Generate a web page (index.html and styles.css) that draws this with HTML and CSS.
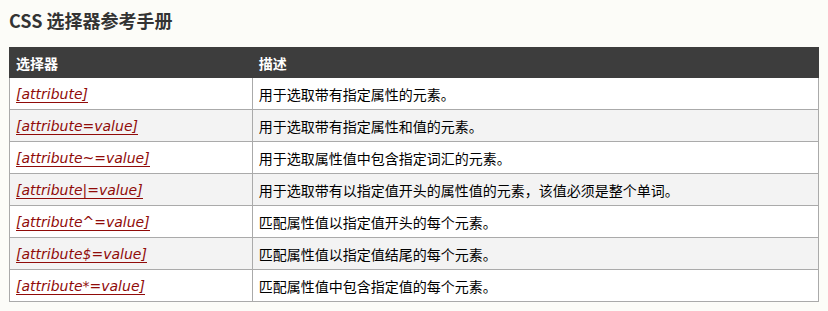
FILE: index.html
```html
<!DOCTYPE html>
<html lang="zh">
<head>
<meta charset="utf-8">
<title>CSS 选择器参考手册</title>
<link rel="stylesheet" href="styles.css">
</head>
<body>
<div class="page">
  <h2 class="title">CSS 选择器参考手册</h2>
  <table class="ref">
    <thead>
      <tr><th class="c1">选择器</th><th>描述</th></tr>
    </thead>
    <tbody>
      <tr><td><a class="sel" href="#">[attribute]</a></td><td>用于选取带有指定属性的元素。</td></tr>
      <tr><td><a class="sel" href="#">[attribute=value]</a></td><td>用于选取带有指定属性和值的元素。</td></tr>
      <tr><td><a class="sel" href="#">[attribute~=value]</a></td><td>用于选取属性值中包含指定词汇的元素。</td></tr>
      <tr><td><a class="sel" href="#">[attribute|=value]</a></td><td>用于选取带有以指定值开头的属性值的元素，该值必须是整个单词。</td></tr>
      <tr><td><a class="sel" href="#">[attribute^=value]</a></td><td>匹配属性值以指定值开头的每个元素。</td></tr>
      <tr><td><a class="sel" href="#">[attribute$=value]</a></td><td>匹配属性值以指定值结尾的每个元素。</td></tr>
      <tr><td><a class="sel" href="#">[attribute*=value]</a></td><td>匹配属性值中包含指定值的每个元素。</td></tr>
    </tbody>
  </table>
</div>
</body>
</html>
```
FILE: styles.css
```css
html, body {
  margin: 0;
  padding: 0;
  background: #fcfcf8;
}
body {
  font-family: "Noto Sans CJK SC", "Noto Sans", sans-serif;
  color: #000;
}
.page {
  padding: 0 9px;
}
.title {
  margin: 0;
  padding: 8px 0 0;
  height: 47px;
  box-sizing: border-box;
  font-size: 18px;
  line-height: 24px;
  font-weight: bold;
  color: #333;
}
.ref {
  width: 810px;
  border-collapse: collapse;
  border: 1px solid #aaa;
  font-size: 14px;
}
.ref th {
  background: #3d3d3d;
  color: #fff;
  text-align: left;
  font-weight: bold;
  font-size: 14px;
  height: 30px;
  padding: 0 6px;
  box-sizing: border-box;
  border: 1px solid #3d3d3d;
}
.ref th.c1 {
  width: 30%;
}
.ref td {
  height: 32px;
  padding: 0 6px;
  box-sizing: border-box;
  border: 1px solid #aaa;
  background: #fff;
  line-height: 18px;
}
.ref tbody tr:nth-child(even) td {
  background: #f3f3f3;
}
.sel {
  font-family: "DejaVu Sans", "Liberation Sans", sans-serif;
  font-style: italic;
  font-size: 14px;
  color: #900b09;
  text-decoration: none;
  border-bottom: 1px solid #900b09;
}
```
